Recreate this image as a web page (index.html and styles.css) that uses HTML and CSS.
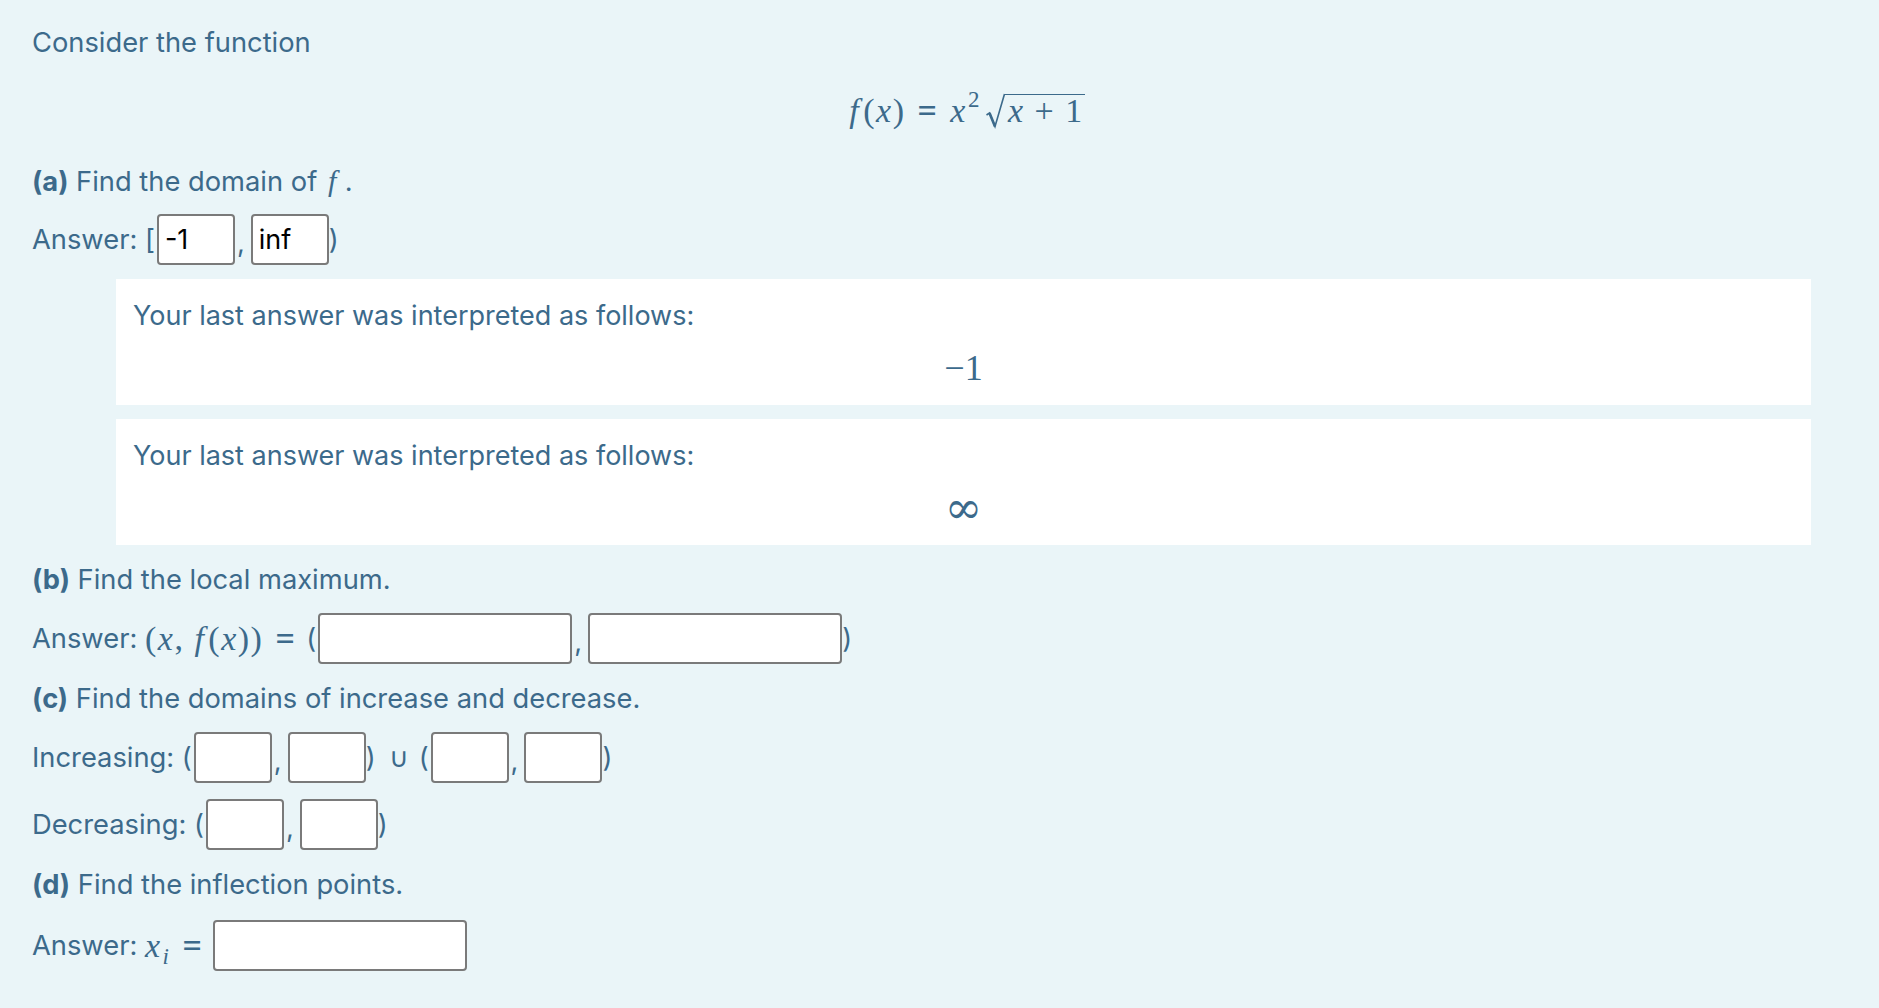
FILE: index.html
```html
<!DOCTYPE html>
<html lang="en">
<head>
<meta charset="utf-8">
<title>Question</title>
<link rel="stylesheet" href="styles.css">
</head>
<body>
<div class="question">
  <div class="text-row">Consider the function</div>

  <div class="display">
    <span class="math big">
      <span class="mi fi">f</span><span class="mo">(</span><span class="mi">x</span><span class="mo">)</span><span class="rel">=</span><span class="mi">x</span><sup class="sup">2</sup><span class="sqrt"><svg class="radical" width="21" height="36" viewBox="0 0 21 36"><path d="M1.5 22 L4.5 20 L10 33.5 L19.5 1" fill="none" stroke="currentColor" stroke-width="1.6" stroke-linejoin="miter"/><path d="M4.5 20 L10 33.5" fill="none" stroke="currentColor" stroke-width="2.6"/></svg><span class="radicand"><span class="mi">x</span><span class="bin">+</span>1</span></span>
    </span>
  </div>

  <div class="text-row"><b>(a)</b> Find the domain of <span class="math mi fsym">f</span>.</div>

  <div class="ans-row">
    <span class="lbl open">Answer:&nbsp;[</span><input class="inp small" type="text" value="-1"><span class="sep">,</span><input class="inp small" type="text" value="inf"><span class="lbl">)</span>
  </div>

  <div class="feedback">
    <div class="fb-text">Your last answer was interpreted as follows:</div>
    <div class="fb-math"><span class="math">−1</span></div>
  </div>

  <div class="feedback">
    <div class="fb-text">Your last answer was interpreted as follows:</div>
    <div class="fb-math"><span class="math inf">∞</span></div>
  </div>

  <div class="text-row"><b>(b)</b> Find the local maximum.</div>

  <div class="ans-row">
    <span class="lbl">Answer:&nbsp;</span><span class="math inline-math"><span class="mo">(</span><span class="mi">x</span><span class="mo">,</span><span class="thin"></span><span class="mi fi">f</span><span class="mo">(</span><span class="mi">x</span><span class="mo">))</span><span class="rel">=</span></span><span class="lbl open">(</span><input class="inp wide" type="text"><span class="sep">,</span><input class="inp wide" type="text"><span class="lbl">)</span>
  </div>

  <div class="text-row"><b>(c)</b> Find the domains of increase and decrease.</div>

  <div class="ans-row">
    <span class="lbl open">Increasing:&nbsp;(</span><input class="inp small" type="text"><span class="sep">,</span><input class="inp small" type="text"><span class="lbl">)</span><span class="lbl cup">∪</span><span class="lbl open">(</span><input class="inp small" type="text"><span class="sep">,</span><input class="inp small" type="text"><span class="lbl">)</span>
  </div>

  <div class="ans-row dec-row">
    <span class="lbl open">Decreasing:&nbsp;(</span><input class="inp small" type="text"><span class="sep">,</span><input class="inp small" type="text"><span class="lbl">)</span>
  </div>

  <div class="text-row"><b>(d)</b> Find the inflection points.</div>

  <div class="ans-row last-row">
    <span class="lbl">Answer:&nbsp;</span><span class="math inline-math"><span class="mi">x</span><sub class="sub mi">i</sub><span class="rel">=</span></span><input class="inp wide" type="text">
  </div>
</div>
</body>
</html>
```

FILE: styles.css
```css
html, body {
  margin: 0;
  padding: 0;
}

body {
  background: #eaf5f8;
  color: #3c6a8b;
  font-family: "Inter", "Noto Sans", sans-serif;
  font-size: 27.3px;
  padding: 21px 32px 40px 32px;
  min-height: 1008px;
  box-sizing: border-box;
}

.question {
  display: flex;
  flex-direction: column;
  gap: 13px;
}

.text-row {
  height: 42px;
  line-height: 43px;
  white-space: nowrap;
}

.text-row b {
  font-weight: 700;
}

.display {
  height: 70px;
  margin-left: 53px;
  display: flex;
  align-items: center;
  justify-content: center;
}

.math {
  font-family: "Liberation Serif", "Times New Roman", serif;
  font-size: 34px;
  letter-spacing: 1.5px;
  white-space: nowrap;
}

.math.big {
  line-height: 40px;
}

.mi {
  font-style: italic;
}

.fi {
  margin-left: 2px;
  margin-right: 3px;
}

.fsym {
  font-size: 30px;
  margin-left: 3px;
  margin-right: 7px;
}

.rel {
  margin: 0 12px;
  font-weight: 700;
}

.bin {
  margin: 0 10px;
}

.thin {
  display: inline-block;
  width: 8px;
}

.sup {
  font-size: 23px;
  vertical-align: 15px;
  line-height: 0;
  margin-left: 1px;
}

.sub {
  font-size: 23px;
  vertical-align: -7px;
  line-height: 0;
  margin-left: 1px;
}

.sqrt {
  display: inline-block;
  white-space: nowrap;
  margin-left: 4px;
}

.radical {
  display: inline-block;
  vertical-align: -7px;
}

.radicand {
  display: inline-block;
  line-height: 32px;
  border-top: 1.5px solid currentColor;
  padding: 0 1px 0 3px;
  margin-left: -1px;
}

.ans-row {
  height: 51px;
  display: flex;
  align-items: center;
  white-space: nowrap;
}

.lbl {
  line-height: 42px;
}

.lbl.open {
  margin-right: 2px;
}

.cup {
  margin: 0 10px 0 13px;
}

.inline-math {
  line-height: 42px;
}

.inline-math .rel {
  margin: 0 10px 0 12px;
}

.sep {
  line-height: 42px;
  align-self: center;
  padding-top: 6px;
  margin: 0 6px 0 2px;
}

.inp {
  height: 51px;
  box-sizing: border-box;
  border: 2px solid #7a7a7a;
  border-radius: 4px;
  background: #ffffff;
  font-family: "Inter", "Noto Sans", sans-serif;
  font-size: 27px;
  color: #000000;
  padding: 0 6px;
  margin: 0;
  outline: none;
}

.inp.small {
  width: 78px;
}

.inp.wide {
  width: 254px;
}

.feedback {
  background: #ffffff;
  margin-left: 84px;
  margin-right: 36px;
  margin-top: 1px;
  height: 126px;
  box-sizing: border-box;
  padding: 16px 17px 9px 17px;
}

.fb-text {
  height: 42px;
  line-height: 42px;
  font-size: 27px;
}

.fb-math {
  margin-top: 3px;
  height: 56px;
  line-height: 56px;
  text-align: center;
}

.fb-math .math {
  font-size: 36px;
  letter-spacing: 0;
}

.fb-math .math.inf {
  font-family: "DejaVu Serif", serif;
  font-size: 45px;
}

.dec-row {
  margin-top: 3px;
}

.last-row {
  margin-top: 2px;
}
```
